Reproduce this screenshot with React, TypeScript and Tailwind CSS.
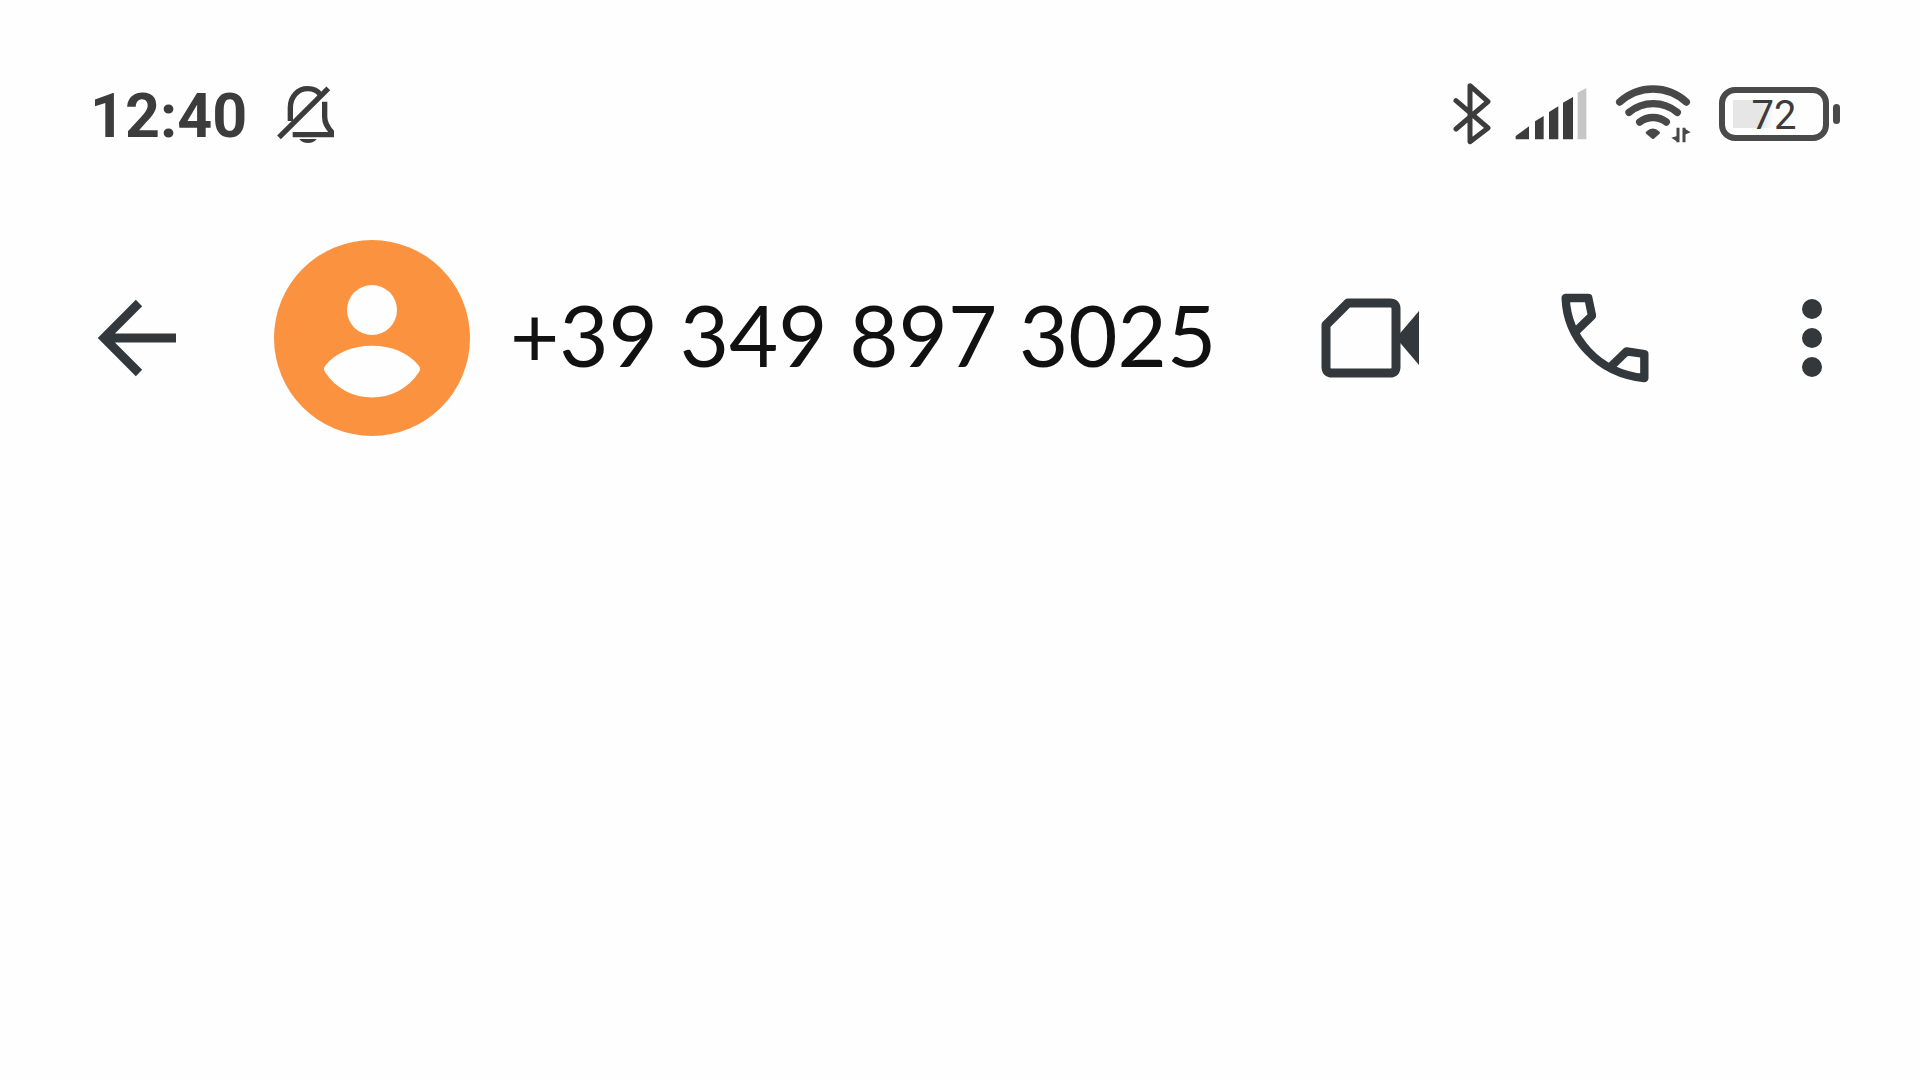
import React from "react";

const StatusBar = () => {
  return (
    <div className="flex w-full items-center justify-between pl-[90px] pr-20 text-[#3c3c3c]">
      <div className="flex items-center gap-x-7">
        <time className="pt-1 font-['Roboto',sans-serif] text-[61px] leading-[64px] font-bold">12:40</time>
        <BellOffIcon />
      </div>
      <div className="flex items-center">
        <BluetoothIcon />
        <SignalIcon />
        <WifiIcon />
        <Battery level={72} />
      </div>
    </div>
  );
};

const BellOffIcon = () => (
  <svg
    className="h-[60px] w-[60px]"
    viewBox="-3 -3 180 180"
    fill="none"
    stroke="currentColor"
    strokeWidth="16"
    aria-label="Notifications off"
  >
    <path d="M43 108V68C43 33 67 11 95 11c18 0 30 6 38 18" />
    <path d="M9 157 157 10" />
    <path d="M146 50v45c0 20 8 31 20 45v9H50" />
    <path d="M70 162h52c-5 8-15 12-26 12s-21-4-26-12Z" fill="currentColor" stroke="none" />
  </svg>
);

const BluetoothIcon = () => (
  <svg
    className="mr-6 h-[62px] w-[38px]"
    viewBox="0 0 114 186"
    fill="none"
    stroke="currentColor"
    strokeWidth="15"
    strokeLinecap="round"
    strokeLinejoin="round"
    aria-label="Bluetooth"
  >
    <path d="m9 53 96 82-54 41V8l54 48-96 82" />
  </svg>
);

const SignalIcon = () => (
  <svg className="mr-7 h-[52px] w-[72px]" viewBox="0 0 216 156" fill="currentColor" aria-label="Signal">
    <path d="M2 154v-10l40-29v39Z" />
    <path d="M60 154v-54l26-16v70Z" />
    <path d="M102 154V72l28-17v99Z" />
    <path d="M144 154V44l30-17v127Z" />
    <path d="M188 154V14l26-14v154Z" fill="#c6c6c6" />
  </svg>
);

const WifiIcon = () => (
  <svg
    className="mr-7 h-[60px] w-[76px]"
    viewBox="0 -3 228 180"
    fill="none"
    stroke="#484848"
    strokeWidth="22"
    strokeLinecap="round"
    aria-label="Wi-Fi"
  >
    <path d="M14 51C72-1 156-1 214 51" />
    <path d="M42 82C84 47 145 47 187 82" />
    <path d="M74 111c24-18 56-18 80 0" />
    <path
      d="M96 143c11-10 24-10 35 0l-17 15Z"
      fill="#484848"
      strokeWidth="8"
      strokeLinejoin="round"
    />
    <path d="M189 128v44M207 128v44" strokeWidth="9" strokeLinecap="butt" />
    <path d="m169 158 20-6v20Zm58-16-20 8v-20Z" fill="#484848" stroke="none" />
  </svg>
);

interface BatteryProps {
  level: number;
}

const Battery = ({ level }: BatteryProps) => {
  return (
    <div className="flex items-center gap-x-1">
      <div className="flex h-[54px] w-[110px] items-center rounded-2xl border-[6px] border-[#4a4a4a] px-2">
        <div className="flex h-7 w-full items-center justify-center bg-linear-to-r from-[#e6e6e6] from-35% to-transparent to-50%">
          <span className="pt-1 font-['Roboto',sans-serif] text-[40px] leading-10">{level}</span>
        </div>
      </div>
      <div className="h-5 w-[7px] rounded-full bg-[#4a4a4a]" />
    </div>
  );
};

const Avatar = () => (
  <svg className="h-[196px] w-[196px] shrink-0" viewBox="0 0 196 196" aria-label="Contact">
    <circle cx="98" cy="98" r="98" fill="#fb923f" />
    <circle cx="98" cy="70" r="25" fill="#fefefe" />
    <path d="M51 126C71 99 125 99 145 126q2 3 0 6C123 166 73 166 51 132q-2-3 0-6Z" fill="#fefefe" />
  </svg>
);

const ChatHeader = () => {
  return (
    <header className="flex w-full items-center pl-[98px] pr-[98px] text-[#33383c]">
      <button type="button" aria-label="Back">
        <svg className="h-20 w-20" viewBox="0 0 80 80" fill="none" stroke="currentColor" strokeWidth="9">
          <path d="M78 40H8M41 5 6 40l35 35" />
        </svg>
      </button>
      <div className="ml-[96px] flex items-center gap-x-10">
        <Avatar />
        <h1 className="pb-2 font-['Lato',sans-serif] text-[85px] leading-[100px] whitespace-nowrap text-[#111111]">
          +39 349 897 3025
        </h1>
      </div>
      <div className="ml-auto flex items-center">
        <button type="button" aria-label="Video call" className="mr-[140px]">
          <svg className="h-20 w-[100px]" viewBox="0 0 100 80" fill="none" stroke="currentColor" strokeWidth="9">
            <path d="M28 5h42q6 0 6 6v58q0 6-6 6H12q-6 0-6-6V27Z" strokeLinejoin="round" />
            <path d="M76 40 99 13v54Z" fill="currentColor" stroke="none" />
          </svg>
        </button>
        <button type="button" aria-label="Call" className="mr-[152px]">
          <svg
            className="h-[90px] w-[90px]"
            viewBox="16 15 270 270"
            fill="none"
            stroke="currentColor"
            strokeWidth="25"
            strokeLinejoin="round"
            strokeLinecap="round"
          >
            <path d="M67 127 112 83 101 30H33C37 147 128 257 269 270V198L216 190 168 236" />
          </svg>
        </button>
        <button type="button" aria-label="More options">
          <svg className="h-20 w-5" viewBox="0 0 20 80" fill="currentColor">
            <circle cx="10" cy="11" r="10" />
            <circle cx="10" cy="40" r="10" />
            <circle cx="10" cy="69" r="10" />
          </svg>
        </button>
      </div>
    </header>
  );
};

const App = () => {
  return (
    <main className="flex min-h-screen flex-col gap-y-[92px] bg-[#fefefe] pt-20">
      <StatusBar />
      <ChatHeader />
    </main>
  );
};

export default App;
